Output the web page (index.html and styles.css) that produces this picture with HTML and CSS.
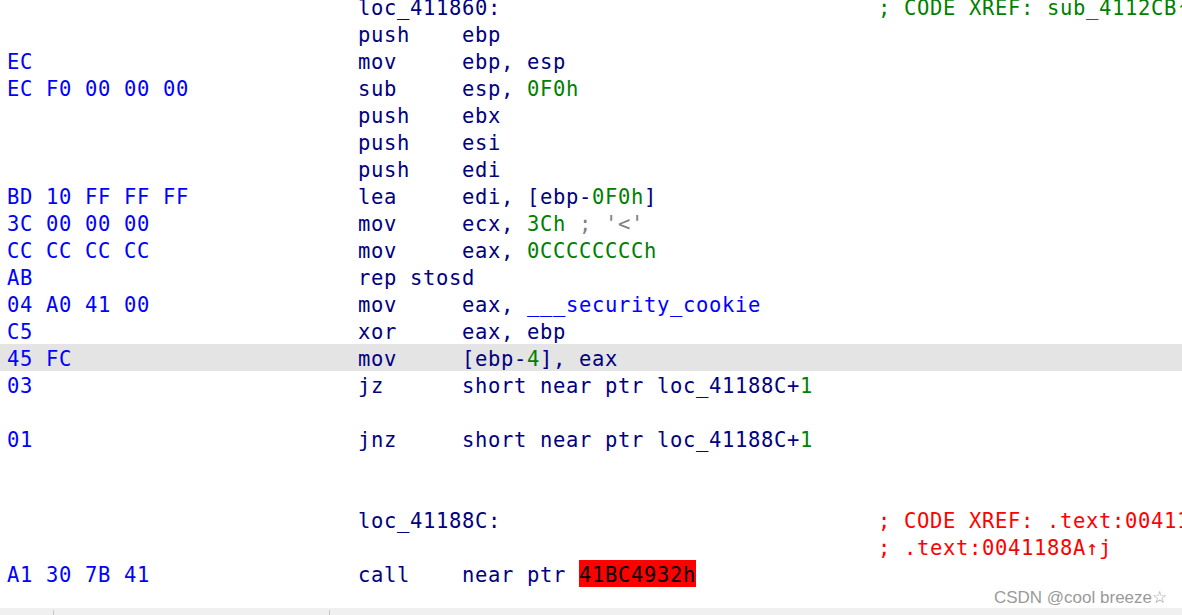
FILE: index.html
```html
<!DOCTYPE html>
<html>
<head>
<meta charset="utf-8">
<link rel="stylesheet" href="styles.css">
</head>
<body>
<div class="screen">
  <div class="code">
    <div class="lines">
      <div class="row"><span class="bytes"></span><span class="mn wide">loc_411860:</span><span class="cmt xref">; CODE XREF: sub_4112CB↑j</span></div>
      <div class="row"><span class="bytes"></span><span class="mn">push</span><span class="op">ebp</span></div>
      <div class="row"><span class="bytes">EC</span><span class="mn">mov</span><span class="op">ebp, esp</span></div>
      <div class="row"><span class="bytes">EC F0 00 00 00</span><span class="mn">sub</span><span class="op">esp, <span class="num">0F0h</span></span></div>
      <div class="row"><span class="bytes"></span><span class="mn">push</span><span class="op">ebx</span></div>
      <div class="row"><span class="bytes"></span><span class="mn">push</span><span class="op">esi</span></div>
      <div class="row"><span class="bytes"></span><span class="mn">push</span><span class="op">edi</span></div>
      <div class="row"><span class="bytes">BD 10 FF FF FF</span><span class="mn">lea</span><span class="op">edi, [ebp-<span class="num">0F0h</span>]</span></div>
      <div class="row"><span class="bytes">3C 00 00 00</span><span class="mn">mov</span><span class="op">ecx, <span class="num">3Ch</span> <span class="gray">; '&lt;'</span></span></div>
      <div class="row"><span class="bytes">CC CC CC CC</span><span class="mn">mov</span><span class="op">eax, <span class="num">0CCCCCCCCh</span></span></div>
      <div class="row"><span class="bytes">AB</span><span class="mn wide">rep stosd</span></div>
      <div class="row"><span class="bytes">04 A0 41 00</span><span class="mn">mov</span><span class="op">eax, <span class="sym">___security_cookie</span></span></div>
      <div class="row"><span class="bytes">C5</span><span class="mn">xor</span><span class="op">eax, ebp</span></div>
      <div class="row current"><span class="bytes">45 FC</span><span class="mn">mov</span><span class="op">[ebp-<span class="num">4</span>], eax</span></div>
      <div class="row"><span class="bytes">03</span><span class="mn">jz</span><span class="op">short near ptr loc_41188C+<span class="num">1</span></span></div>
      <div class="row"></div>
      <div class="row"><span class="bytes">01</span><span class="mn">jnz</span><span class="op">short near ptr loc_41188C+<span class="num">1</span></span></div>
      <div class="row"></div>
      <div class="row"></div>
      <div class="row"><span class="bytes"></span><span class="mn wide">loc_41188C:</span><span class="cmt err">; CODE XREF: .text:00411888↑j</span></div>
      <div class="row"><span class="bytes"></span><span class="mn"></span><span class="op"></span><span class="cmt err">; .text:0041188A↑j</span></div>
      <div class="row"><span class="bytes">A1 30 7B 41</span><span class="mn">call</span><span class="op">near ptr <span class="bad">41BC4932h</span></span></div>
      <div class="row"></div>
    </div>
  </div>
  <div class="status">
    <div class="cell c1"></div>
    <div class="cell c2"></div>
    <div class="cell c3"></div>
  </div>
  <div class="watermark">CSDN @cool breeze☆</div>
</div>
</body>
</html>
```

FILE: styles.css
```css
html, body {
  margin: 0;
  padding: 0;
  background: #ffffff;
}

.screen {
  position: relative;
  width: 1182px;
  height: 615px;
  overflow: hidden;
  display: flex;
  flex-direction: column;
}

.code {
  height: 608px;
  flex: none;
  overflow: hidden;
  font-family: "DejaVu Sans Mono", monospace;
  font-size: 20.5px;
  letter-spacing: 0.66px;
}

.lines {
  margin-top: -7px;
}

.row {
  display: grid;
  grid-template-columns: 351px 104px 416px max-content;
  grid-template-rows: 27px;
  height: 27px;
  line-height: 31px;
  padding-left: 7px;
  color: #000080;
}

.row > span {
  white-space: pre;
}

.row.current {
  background: #e4e4e4;
}

.bytes {
  color: #0000ff;
}

.mn.wide {
  grid-column: span 2;
}

.num {
  color: #008000;
}

.gray {
  color: #808080;
}

.sym {
  color: #0000ff;
}

.cmt {
  grid-column: 4;
}

.xref {
  color: #008000;
}

.err {
  color: #ff0000;
}

.bad {
  background: #ff0000;
  color: #000000;
  display: inline-block;
  height: 27px;
  vertical-align: top;
}

.status {
  height: 7px;
  flex: none;
  background: #f0f0f0;
  display: flex;
  padding-top: 2px;
  box-sizing: border-box;
}

.cell {
  height: 100%;
}

.c1 {
  width: 53px;
  border-right: 1px solid #c8c8c8;
}

.c2 {
  width: 275px;
  border-right: 1px solid #c8c8c8;
}

.watermark {
  position: absolute;
  right: 15px;
  top: 587px;
  font-family: "Liberation Sans", Arial, sans-serif;
  font-size: 17px;
  line-height: 22px;
  color: #9a9a9a;
}
```
